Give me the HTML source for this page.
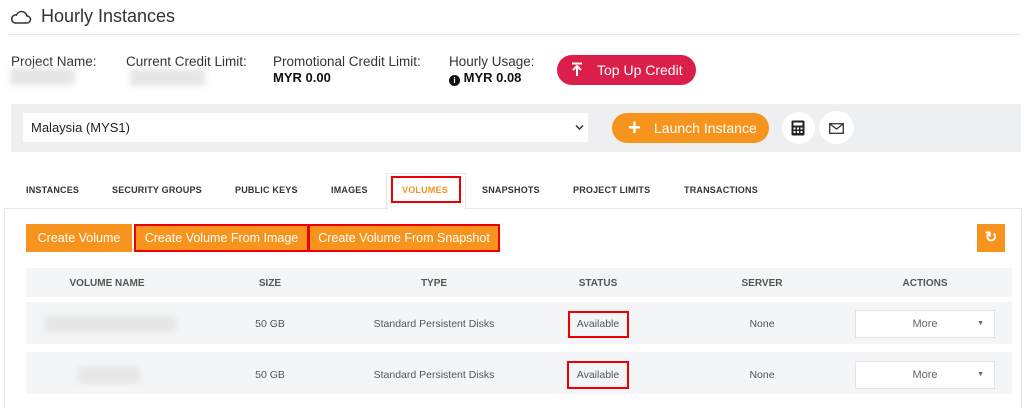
<!DOCTYPE html>
<html><head><style>
*{box-sizing:border-box;margin:0;padding:0}
body{width:1024px;height:402px;overflow:hidden;background:#fff;font-family:"Liberation Sans",sans-serif;color:#333;position:relative}
.a{position:absolute}
.lbl{font-size:13.5px;color:#333;top:54px}
.val{font-size:13px;font-weight:bold;color:#111;top:70px}
.blur{background:#e6e6e6;filter:blur(3px)}
.tab{top:185px;font-size:9px;font-weight:bold;color:#333;letter-spacing:.2px}
.ob{background:#f7941d;color:#fff;font-size:12.5px;top:224px;height:28px;line-height:28px;text-align:center}
.rb{outline:2px solid #e00;outline-offset:-2px}
.row{left:26px;width:986px;background:#f3f5f6}
.c{font-size:10.5px;color:#555;text-align:center;width:160px}
.h{font-size:10px;font-weight:bold;color:#555;text-align:center;width:160px}
.more{width:140px;height:28px;background:#fff;border:1px solid #e2e2e2;font-size:11px;color:#666;line-height:26px;text-align:center}
</style></head><body>
<svg class="a" style="left:10px;top:9px" width="22" height="16" viewBox="0 0 22 16"><path d="M5 14h12a3.5 3.5 0 0 0 0-7 5.5 5.5 0 0 0-10.5-1A4 4 0 0 0 5 14z" fill="none" stroke="#333" stroke-width="1.5"/></svg>
<div class="a" style="left:41px;top:6px;font-size:18px;color:#333">Hourly Instances</div>
<div class="a" style="left:8px;top:34px;width:1013px;height:1px;background:#e6e6e6"></div>
<div class="a lbl" style="left:11px">Project Name:</div>
<div class="a blur" style="left:10px;top:68px;width:65px;height:17px"></div>
<div class="a lbl" style="left:126px">Current Credit Limit:</div>
<div class="a blur" style="left:130px;top:69px;width:75px;height:17px"></div>
<div class="a lbl" style="left:273px">Promotional Credit Limit:</div>
<div class="a val" style="left:273px">MYR 0.00</div>
<div class="a lbl" style="left:449px">Hourly Usage:</div>
<div class="a val" style="left:449px"><span style="display:inline-block;width:11px;height:11px;border-radius:50%;background:#111;color:#fff;font-size:8px;text-align:center;line-height:11px;vertical-align:-1px">i</span> MYR 0.08</div>
<div class="a" style="left:557px;top:55px;width:139px;height:30px;border-radius:15px;background:#dc1e4b;color:#fff;font-size:14px;line-height:30px;padding-left:40px">Top Up Credit</div>
<svg class="a" style="left:570px;top:62px" width="14" height="15" viewBox="0 0 14 15"><path d="M2 1.5h10M7 14V5M3 8l4-4 4 4" stroke="#fff" stroke-width="2" fill="none"/></svg>
<div class="a" style="left:11px;top:104px;width:1010px;height:48px;background:#eeeff1"></div>
<div class="a" style="left:23px;top:113px;width:565px;height:29px;background:#fff;font-size:13px;line-height:29px;padding-left:8px;color:#222">Malaysia (MYS1)</div>
<svg class="a" style="left:575px;top:124px" width="9" height="7" viewBox="0 0 9 7"><path d="M1 1.5l3.5 3.5 3.5-3.5" stroke="#333" stroke-width="1.5" fill="none"/></svg>
<div class="a" style="left:612px;top:113px;width:157px;height:30px;border-radius:15px;background:#f7941d;color:#fff;font-size:14px;line-height:30px;padding-left:42px">Launch Instance</div>
<div class="a" style="left:628px;top:116px;color:#fff;font-size:22px;font-weight:bold;line-height:24px">+</div>
<div class="a" style="left:782px;top:112px;width:33px;height:32px;border-radius:50%;background:#fff"></div>
<svg class="a" style="left:791px;top:120px" width="14" height="16" viewBox="0 0 14 16"><rect x="0.5" y="0.5" width="13" height="15" rx="1.5" fill="#222"/><rect x="2.5" y="2.5" width="9" height="3" fill="#fff"/><g fill="#fff"><rect x="2.5" y="7.5" width="2" height="2"/><rect x="6" y="7.5" width="2" height="2"/><rect x="9.5" y="7.5" width="2" height="2"/><rect x="2.5" y="11" width="2" height="2"/><rect x="6" y="11" width="2" height="2"/><rect x="9.5" y="11" width="2" height="2"/></g></svg>
<div class="a" style="left:819px;top:111px;width:35px;height:33px;border-radius:50%;background:#fff"></div>
<svg class="a" style="left:829px;top:123px" width="15" height="11" viewBox="0 0 15 11"><rect x="0.7" y="0.7" width="13.6" height="9.6" fill="none" stroke="#333" stroke-width="1.3"/><path d="M1 1l6.5 5 6.5-5" fill="none" stroke="#333" stroke-width="1.3"/></svg>
<div class="a" style="left:4px;top:208px;width:1018px;height:200px;border:1px solid #e6e6e6;border-bottom:none"></div>
<div class="a" style="left:386px;top:173px;width:80px;height:37px;background:#fff;border:1px solid #e6e6e6;border-bottom:none"></div>
<div class="a" style="left:391px;top:176px;width:70px;height:27px;border:2px solid #e00"></div>
<div class="a tab" style="left:26px">INSTANCES</div>
<div class="a tab" style="left:112px">SECURITY GROUPS</div>
<div class="a tab" style="left:235px">PUBLIC KEYS</div>
<div class="a tab" style="left:331px">IMAGES</div>
<div class="a tab" style="left:402px;color:#f7941d">VOLUMES</div>
<div class="a tab" style="left:482px">SNAPSHOTS</div>
<div class="a tab" style="left:573px">PROJECT LIMITS</div>
<div class="a tab" style="left:684px">TRANSACTIONS</div>
<div class="a ob" style="left:26px;width:106px">Create Volume</div>
<div class="a ob rb" style="left:134px;width:175px">Create Volume From Image</div>
<div class="a ob rb" style="left:308px;width:192px">Create Volume From Snapshot</div>
<div class="a ob" style="left:977px;width:28px;font-weight:bold;font-size:15px">&#x21bb;</div>
<div class="a row" style="top:268px;height:29px"></div>
<div class="a row" style="top:302px;height:42px"></div>
<div class="a row" style="top:352px;height:42px"></div>
<div class="a h" style="left:27px;top:278px">VOLUME NAME</div>
<div class="a h" style="left:190px;top:278px">SIZE</div>
<div class="a h" style="left:354px;top:278px">TYPE</div>
<div class="a h" style="left:518px;top:278px">STATUS</div>
<div class="a h" style="left:682px;top:278px">SERVER</div>
<div class="a h" style="left:845px;top:278px">ACTIONS</div>
<div class="a blur" style="left:44px;top:316px;width:132px;height:16px"></div>
<div class="a blur" style="left:78px;top:367px;width:62px;height:16px"></div>
<div class="a c" style="left:190px;top:318px">50 GB</div>
<div class="a c" style="left:354px;top:318px">Standard Persistent Disks</div>
<div class="a c" style="left:518px;top:318px">Available</div>
<div class="a c" style="left:682px;top:318px">None</div>
<div class="a c" style="left:190px;top:369px">50 GB</div>
<div class="a c" style="left:354px;top:369px">Standard Persistent Disks</div>
<div class="a c" style="left:518px;top:369px">Available</div>
<div class="a c" style="left:682px;top:369px">None</div>
<div class="a" style="left:568px;top:311px;width:61px;height:27px;border:2px solid #e00"></div>
<div class="a" style="left:567px;top:361px;width:62px;height:28px;border:2px solid #e00"></div>
<div class="a more" style="left:855px;top:310px">More<span style="position:absolute;right:10px;font-size:7px">&#9660;</span></div>
<div class="a more" style="left:855px;top:361px">More<span style="position:absolute;right:10px;font-size:7px">&#9660;</span></div>
</body></html>
